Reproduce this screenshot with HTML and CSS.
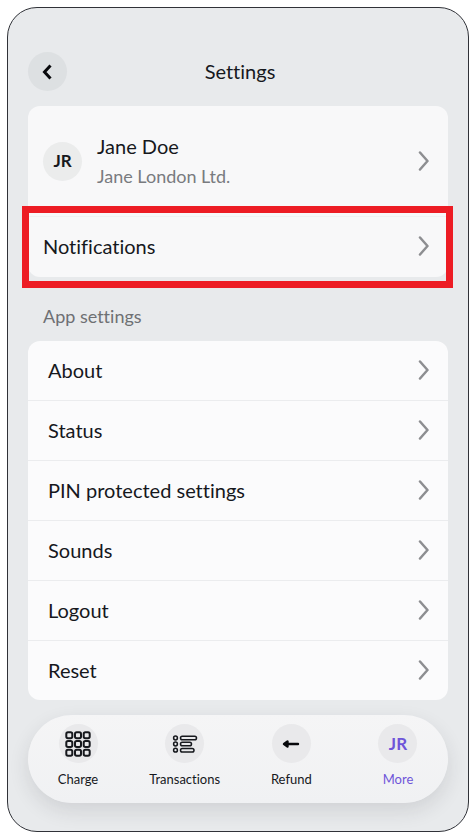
FILE: index.html
```html
<!DOCTYPE html>
<html lang="en">
<head>
<meta charset="utf-8">
<meta name="viewport" content="width=device-width, initial-scale=1">
<title>Settings</title>
<link rel="stylesheet" href="styles.css">
</head>
<body>
<svg class="defs" aria-hidden="true">
  <symbol id="chevron" viewBox="0 0 12 20"><path d="M2 1.500 L9.500 10 L2 18.500"/></symbol>
</svg>
<div class="phone">
  <header class="topbar">
    <button class="back" type="button" aria-label="Back">
      <svg width="14" height="18" viewBox="0 0 14 18"><path d="M9.500 2.500 L3.500 9 L9.500 15.500"/></svg>
    </button>
    <h1 class="title">Settings</h1>
  </header>
  <main>
    <section class="card account">
      <a class="row profile" href="#profile">
        <span class="circle">JR</span>
        <span class="who"><span class="name">Jane Doe</span><span class="company">Jane London Ltd.</span></span>
        <svg class="chevron"><use href="#chevron"/></svg>
      </a>
      <a class="row highlighted" href="#notifications">Notifications<svg class="chevron"><use href="#chevron"/></svg></a>
    </section>
    <h2 class="section-title">App settings</h2>
    <section class="card list">
      <a class="row" href="#about">About<svg class="chevron"><use href="#chevron"/></svg></a>
      <a class="row" href="#status">Status<svg class="chevron"><use href="#chevron"/></svg></a>
      <a class="row" href="#pin">PIN protected settings<svg class="chevron"><use href="#chevron"/></svg></a>
      <a class="row" href="#sounds">Sounds<svg class="chevron"><use href="#chevron"/></svg></a>
      <a class="row" href="#logout">Logout<svg class="chevron"><use href="#chevron"/></svg></a>
      <a class="row" href="#reset">Reset<svg class="chevron"><use href="#chevron"/></svg></a>
    </section>
  </main>
  <nav class="tabs">
    <a class="tab" href="#charge">
      <span class="circle">
        <svg width="26" height="26" viewBox="0 0 26 26">
          <rect x="1.300" y="1.300" width="6" height="6" rx="1.700"/><rect x="10" y="1.300" width="6" height="6" rx="1.700"/><rect x="18.700" y="1.300" width="6" height="6" rx="1.700"/>
          <rect x="1.300" y="10" width="6" height="6" rx="1.700"/><rect x="10" y="10" width="6" height="6" rx="1.700"/><rect x="18.700" y="10" width="6" height="6" rx="1.700"/>
          <rect x="1.300" y="18.700" width="6" height="6" rx="1.700"/><rect x="10" y="18.700" width="6" height="6" rx="1.700"/><rect x="18.700" y="18.700" width="6" height="6" rx="1.700"/>
        </svg>
      </span>
      Charge
    </a>
    <a class="tab" href="#transactions">
      <span class="circle">
        <svg class="thin" width="26" height="20" viewBox="0 0 26 20">
          <circle cx="3.500" cy="4" r="1.900"/><circle cx="3.500" cy="10" r="1.900"/><circle cx="3.500" cy="16.200" r="1.900"/>
          <rect x="8.500" y="2.200" width="16" height="3.600" rx="1.800"/><rect x="8.500" y="8.200" width="11" height="3.600" rx="1.800"/><rect x="8.500" y="14.400" width="13.500" height="3.600" rx="1.800"/>
        </svg>
      </span>
      Transactions
    </a>
    <a class="tab" href="#refund">
      <span class="circle">
        <svg class="arrow" width="18" height="10" viewBox="0 0 18 10"><path d="M4 5 H16"/><path class="head" d="M2 5 L5.500 2.500 V7.500 Z"/></svg>
      </span>
      Refund
    </a>
    <a class="tab active" href="#more" aria-current="page">
      <span class="circle">JR</span>
      More
    </a>
  </nav>
</div>
</body>
</html>
```
FILE: styles.css
```css
* { box-sizing: border-box; }

body {
  margin: 0;
  padding: 7px 5px 7px 7px;
  background: #fff;
  color: #16181d;
  font-family: Lato, "Liberation Sans", sans-serif;
  font-size: 20px;
  font-variant-ligatures: none;
  line-height: 24px;
}

a { color: inherit; text-decoration: none; }

.defs { position: absolute; width: 0; height: 0; }

svg {
  fill: none;
  stroke: #16181d;
  stroke-width: 2;
  stroke-linecap: round;
  stroke-linejoin: round;
}

.phone {
  padding: 44px 20px 28px;
  border: 1px solid #303238;
  border-radius: 30px;
  background: #e8eaec;
}

.topbar {
  display: grid;
  grid-template-columns: 39px 1fr 39px;
  align-items: center;
  margin-bottom: 15px;
}

.back {
  display: grid;
  place-items: center;
  width: 39px;
  height: 39px;
  padding: 0;
  border: 0;
  border-radius: 50%;
  background: #dde0e2;
}

.back svg { stroke: #08090c; stroke-width: 3; stroke-linecap: butt; stroke-linejoin: miter; }

.title {
  margin: 0;
  padding: 0 0 2px 4px;
  font-size: 20px;
  font-weight: 400;
  text-align: center;
}

.card { border-radius: 12px; background: #f8f8f9; }

.row {
  display: flex;
  align-items: center;
  justify-content: space-between;
  height: 60px;
  padding: 0 18px 2px 15px;
}

.chevron {
  flex: none;
  width: 12px;
  height: 20px;
  stroke: #8d8e91;
  stroke-width: 2.5;
}

.profile { height: 111px; gap: 15px; padding-bottom: 0; border-bottom: 1px solid #f0f1f2; }

.circle {
  display: grid;
  flex: none;
  place-items: center;
  width: 39px;
  height: 39px;
  border-radius: 50%;
  background: #ebecec;
  font-size: 17px;
  font-weight: 700;
}

.who { display: flex; flex: 1; flex-direction: column; gap: 6px; }

.company { color: #797b7f; font-size: 18px; }

.highlighted { position: relative; }

.highlighted::after {
  content: "";
  position: absolute;
  inset: -11px -5px -11px -6px;
  border: 7px solid #ed1c24;
}

.section-title {
  margin: 27px 15px 13px;
  color: #6e7073;
  font-size: 18px;
  font-weight: 400;
}

.list { background: #fbfbfc; }

.list .row { padding-left: 20px; border-bottom: 1px solid #ebecee; }

.list .row:last-child { height: 59px; border-bottom: 0; }

.tabs {
  display: flex;
  justify-content: space-between;
  margin-top: 15px;
  padding: 9px 14px 15px;
  border-radius: 44px;
  background: linear-gradient(#f5f5f6, #f0f1f3);
  box-shadow: 0 8px 20px rgba(40, 44, 52, 0.12);
}

.tab {
  display: flex;
  flex-direction: column;
  align-items: center;
  gap: 7px;
  width: 72px;
  font-size: 13px;
  line-height: 18px;
}

.tabs .circle { background: #e9e9eb; }

.tabs .thin { stroke-width: 1.5; }

.arrow { stroke: #08090c; stroke-width: 2.4; }

.head { fill: #08090c; }

.active { color: #6f55d9; }
```
